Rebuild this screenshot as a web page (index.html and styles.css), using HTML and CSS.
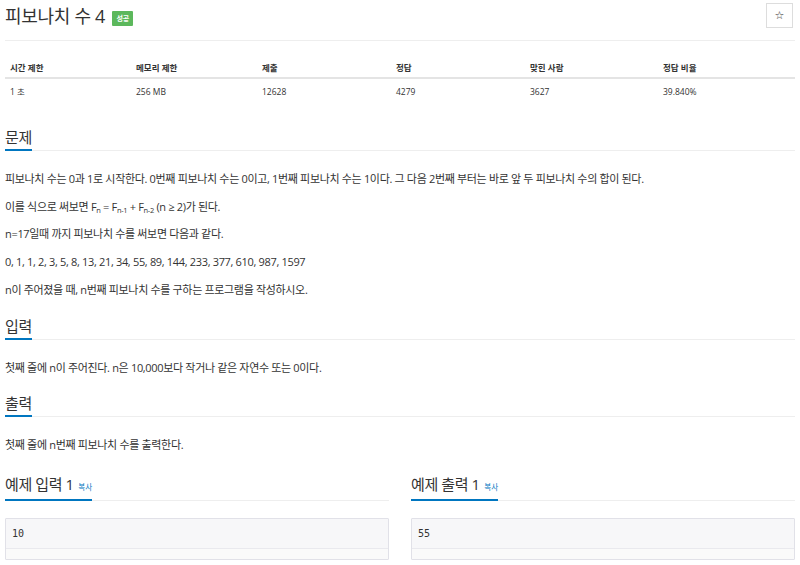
FILE: index.html
```html
<!DOCTYPE html>
<html lang="ko">
<head>
<meta charset="utf-8">
<link rel="stylesheet" href="styles.css">
</head>
<body>
<div class="page">
  <div class="header">
    <h1 class="title">피보나치 수 4 <span class="badge">성공</span></h1>
    <button class="star">☆</button>
  </div>

  <table class="info">
    <thead>
      <tr><th>시간 제한</th><th>메모리 제한</th><th>제출</th><th>정답</th><th>맞힌 사람</th><th>정답 비율</th></tr>
    </thead>
    <tbody>
      <tr><td>1 초</td><td>256 MB</td><td>12628</td><td>4279</td><td>3627</td><td>39.840%</td></tr>
    </tbody>
  </table>

  <section class="sec">
    <div class="sec-head"><h2>문제</h2></div>
    <p>피보나치 수는 0과 1로 시작한다. 0번째 피보나치 수는 0이고, 1번째 피보나치 수는 1이다. 그 다음 2번째 부터는 바로 앞 두 피보나치 수의 합이 된다.</p>
    <p>이를 식으로 써보면 F<sub>n</sub> = F<sub>n-1</sub> + F<sub>n-2</sub> (n ≥ 2)가 된다.</p>
    <p>n=17일때 까지 피보나치 수를 써보면 다음과 같다.</p>
    <p>0, 1, 1, 2, 3, 5, 8, 13, 21, 34, 55, 89, 144, 233, 377, 610, 987, 1597</p>
    <p>n이 주어졌을 때, n번째 피보나치 수를 구하는 프로그램을 작성하시오.</p>
  </section>

  <section class="sec">
    <div class="sec-head"><h2>입력</h2></div>
    <p>첫째 줄에 n이 주어진다. n은 10,000보다 작거나 같은 자연수 또는 0이다.</p>
  </section>

  <section class="sec">
    <div class="sec-head"><h2>출력</h2></div>
    <p>첫째 줄에 n번째 피보나치 수를 출력한다.</p>
  </section>

  <div class="samples">
    <section class="sample">
      <div class="sec-head"><h2>예제 입력 1 <a class="copy">복사</a></h2></div>
      <div class="pre"><pre>10</pre><div class="scroll"></div></div>
    </section>
    <section class="sample">
      <div class="sec-head"><h2>예제 출력 1 <a class="copy">복사</a></h2></div>
      <div class="pre"><pre>55</pre><div class="scroll"></div></div>
    </section>
  </div>
</div>
</body>
</html>
```

FILE: styles.css
```css
* { box-sizing: border-box; }
body {
  margin: 0;
  font-family: "Open Sans", "Noto Sans CJK KR", sans-serif;
  color: #333;
  background: #fff;
}
.page { padding: 0 5px; }
.header {
  display: flex;
  justify-content: space-between;
  align-items: flex-start;
  border-bottom: 1px solid #eee;
  height: 41px;
  padding-top: 3px;
}
.title {
  margin: 0;
  font-size: 18px;
  font-weight: 400;
  line-height: 26px;
  color: #333;
  letter-spacing: -0.3px;
}
.badge {
  display: inline-block;
  background: #5cb85c;
  color: #fff;
  font-size: 7px;
  font-weight: 700;
  padding: 4px 4px;
  border-radius: 1px;
  vertical-align: 2px;
  line-height: 7px;
  margin-left: 3px;
  letter-spacing: 0;
}
.star {
  width: 27px;
  height: 25px;
  margin-right: 2px;
  border: 1px solid #ddd;
  background: #fff;
  font-size: 11px;
  color: #333;
  padding: 0;
  font-family: "DejaVu Sans", sans-serif;
}
.info {
  width: 100%;
  border-collapse: collapse;
  margin-top: 15px;
  margin-bottom: 18px;
  font-size: 8.5px;
  table-layout: fixed;
}
.info th, .info td {
  text-align: left;
  padding: 0 5px;
}
.info th {
  font-weight: 700;
  height: 22px;
  border-bottom: 2px solid #e4e4e4;
}
.info td { height: 25px; }
.info th:nth-child(1), .info th:nth-child(2) { width: 126px; }
.info th:nth-child(3), .info th:nth-child(4) { width: 134px; }
.info th:nth-child(5) { width: 133px; }
.sec { margin-top: 6px; }
.sec-head {
  border-bottom: 1px solid #eee;
  height: 30px;
  display: flex;
  align-items: flex-end;
}
.sec-head h2 {
  margin: 0 0 -1px 0;
  font-size: 15px;
  font-weight: 400;
  line-height: 24px;
  border-bottom: 2px solid #0076c0;
  padding-bottom: 0;
  color: #333;
  letter-spacing: -0.4px;
}
.sec p {
  margin: 0;
  font-size: 11px;
  line-height: 27.7px;
  letter-spacing: -0.33px;
}
.sec-head + p { margin-top: 14px; }
sub { font-size: 7.5px; vertical-align: -2px; line-height: 0; }
.samples {
  display: flex;
  gap: 22px;
  margin-top: 12px;
}
.sample { flex: 1; }
.copy {
  font-size: 7.5px;
  color: #0076c0;
  letter-spacing: 0;
  margin-left: 1px;
}
.pre {
  margin-top: 17px;
  border: 1px solid #e1e1e8;
  background: #f7f7f9;
  border-radius: 1px;
}
.pre pre {
  margin: 0;
  padding: 7px 6px 6px;
  font-family: "DejaVu Sans Mono", monospace;
  font-size: 10px;
  line-height: 16px;
  color: #333;
  border-bottom: 1px solid #e9e9ee;
}
.scroll { height: 10px; background: #fafafa; }
```
